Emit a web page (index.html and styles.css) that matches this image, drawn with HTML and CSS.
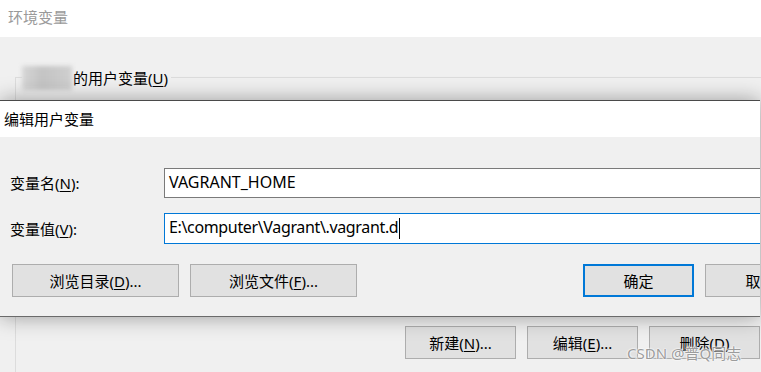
FILE: index.html
```html
<!DOCTYPE html>
<html lang="zh-CN">
<head>
<meta charset="utf-8">
<title>编辑用户变量</title>
<link rel="stylesheet" href="styles.css">
</head>
<body>
<div class="bgwin">
  <div class="bg-title">环境变量</div>
  <div class="bg-body">
    <div class="group">
      <div class="group-legend"><span class="blur"></span><span>的用户变量(<u>U</u>)</span></div>
      <div class="group-space"></div>
      <div class="group-buttons">
        <button class="btn btn-sm">新建(<u>N</u>)...</button>
        <button class="btn btn-sm">编辑(<u>E</u>)...</button>
        <button class="btn btn-sm">删除(<u>D</u>)</button>
      </div>
    </div>
  </div>
</div>

<div class="dialog">
  <div class="dlg-title">编辑用户变量</div>
  <div class="dlg-body">
    <div class="form">
      <label class="lbl">变量名(<u>N</u>):</label>
      <div class="input">VAGRANT_HOME</div>
      <label class="lbl">变量值(<u>V</u>):</label>
      <div class="input focused"><span class="path">E:\computer\Vagrant\.vagrant.d</span><span class="caret"></span></div>
    </div>
    <div class="dlg-buttons">
      <div class="left-btns">
        <button class="btn btn-lg">浏览目录(<u>D</u>)...</button>
        <button class="btn btn-lg">浏览文件(<u>F</u>)...</button>
      </div>
      <div class="right-btns">
        <button class="btn btn-sm primary">确定</button>
        <button class="btn btn-sm">取消</button>
      </div>
    </div>
  </div>
</div>

<div class="watermark">CSDN @普Q同志</div>
</body>
</html>
```

FILE: styles.css
```css
* { box-sizing: border-box; }
html, body { margin: 0; padding: 0; }
body {
  width: 761px;
  height: 372px;
  overflow: hidden;
  background: #f0f0f0;
  font-family: "Segoe UI", "Noto Sans", "Noto Sans CJK SC", sans-serif;
  font-size: 15px;
  color: #000;
  position: relative;
}
u { text-decoration: underline; text-underline-offset: 2px; }

.bgwin { display: flex; flex-direction: column; height: 372px; overflow: hidden; }
.bg-title {
  flex-shrink: 0;
  height: 37px;
  background: #fff;
  color: #9a9a9a;
  padding: 7px 0 0 8px;
  line-height: 20px;
}
.bg-body { flex-shrink: 0; padding: 40px 0 0 15px; }
.group {
  border-left: 1px solid #dcdcdc;
  border-top: 1px solid #dcdcdc;
  position: relative;
  height: 320px;
  padding-left: 389px;
}
.group-legend {
  position: absolute;
  top: -12px;
  left: 6px;
  display: flex;
  align-items: center;
  background: #f0f0f0;
  line-height: 22px;
  padding-right: 3px;
}
.blur {
  display: inline-block;
  width: 50px;
  height: 24px;
  background: linear-gradient(90deg, #d6d6d6, #c4c4c4 40%, #cfcfcf);
  filter: blur(2px);
  margin-right: 1px;
}
.group-space { height: 248px; }
.group-buttons { display: flex; gap: 11px; }

.btn {
  font: inherit;
  color: #000;
  background: #e1e1e1;
  border: 1px solid #adadad;
  padding: 0;
  height: 33px;
  line-height: 30px;
  text-align: center;
  flex-shrink: 0;
}
.btn-sm { width: 111px; }
.btn-lg { width: 167px; }
.btn.primary { border: 2px solid #0078d7; }

.dialog {
  position: absolute;
  top: 100px;
  left: 0;
  width: 760px;
  height: 217px;
  border-top: 1px solid #4a4a4a;
  border-bottom: 1px solid #6a6a6a;
  background: #f0f0f0;
  box-shadow: 0 0 20px rgba(0,0,0,0.36);
  display: flex;
  flex-direction: column;
  overflow: hidden;
}
.dlg-title {
  flex-shrink: 0;
  height: 36px;
  background: #fff;
  padding: 7px 0 0 4px;
  line-height: 22px;
}
.dlg-body { padding: 31px 0 0 10px; flex: 1; }
.form {
  display: grid;
  grid-template-columns: 154px 1fr;
  row-gap: 15px;
  align-items: center;
  margin-right: -20px;
}
.lbl { line-height: 20px; }
.input {
  height: 30px;
  border: 1px solid #7a7a7a;
  background: #fff;
  padding: 0 0 0 4px;
  line-height: 27px;
  font-size: 16px;
  white-space: nowrap;
}
.input.focused { border-color: #0078d7; height: 31px; }
.path { letter-spacing: -0.35px; }
.caret {
  display: inline-block;
  width: 1px;
  height: 21px;
  background: #000;
  vertical-align: middle;
  margin-left: 1px;
}
.dlg-buttons {
  display: flex;
  margin-top: 20px;
  padding-left: 2px;
}
.left-btns, .right-btns { display: flex; gap: 11px; }
.right-btns { margin-left: 226px; }

.watermark {
  position: absolute;
  left: 627px;
  top: 343px;
  color: #9c9c9c;
  font-size: 15px;
  line-height: 20px;
  text-shadow: 0 0 2px #fff, 0 0 2px #fff, 0 0 1px #fff;
}
```
